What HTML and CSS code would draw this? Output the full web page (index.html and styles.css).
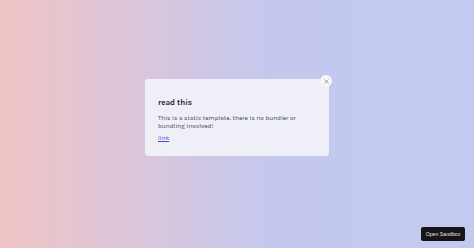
FILE: index.html
```html
<!DOCTYPE html>
<html>
<head>
<meta charset="utf-8">
<link rel="stylesheet" href="styles.css">
</head>
<body>
<main class="stage">
  <div class="card">
    <button class="close" aria-label="close">
      <svg viewBox="0 0 10 10" width="5" height="5"><path d="M1 1L9 9M9 1L1 9" stroke="#777" stroke-width="1.4" fill="none"/></svg>
    </button>
    <h1 class="title">read this</h1>
    <p class="text">This is a static template, there is no bundler or bundling involved!</p>
    <a class="link" href="#">link</a>
  </div>
</main>
<a class="sandbox" href="#">Open Sandbox</a>
</body>
</html>
```
FILE: styles.css
```css
html, body {
  margin: 0;
  height: 100%;
}
body {
  font-family: "Karla", "Inter", "Liberation Sans", sans-serif;
  background: linear-gradient(to right, #efc4c4 0%, #d6c6df 35%, #c4c8ee 57%, #c3c9ef 100%);
}
.stage {
  height: 100%;
  display: flex;
  align-items: center;
  justify-content: center;
  box-sizing: border-box;
  padding-bottom: 13px;
}
.card {
  position: relative;
  width: 184px;
  height: 77px;
  box-sizing: border-box;
  padding: 18px 13px 0 13px;
  background: #efeff8;
  border-radius: 3px;
}
.close {
  position: absolute;
  top: -4px;
  right: -3px;
  width: 12px;
  height: 12px;
  border-radius: 50%;
  border: none;
  padding: 0;
  background: #f6f6fb;
  display: flex;
  align-items: center;
  justify-content: center;
}
.title {
  margin: 0;
  font-size: 8px;
  font-weight: 700;
  color: #222;
  line-height: 12px;
}
.text {
  margin: 5px 0 0 0;
  font-size: 6.5px;
  line-height: 8px;
  color: #44444c;
}
.link {
  display: block;
  width: fit-content;
  margin-top: 4px;
  font-size: 6.5px;
  line-height: 8px;
  color: #4a4adf;
  text-decoration: underline;
}
.sandbox {
  position: fixed;
  right: 9px;
  bottom: 7px;
  width: 44px;
  height: 14px;
  box-sizing: border-box;
  background: #151517;
  color: #e8e8e8;
  border-radius: 2px;
  font-family: "Liberation Sans", sans-serif;
  font-size: 5.2px;
  display: flex;
  align-items: center;
  justify-content: center;
  text-decoration: none;
}
```
